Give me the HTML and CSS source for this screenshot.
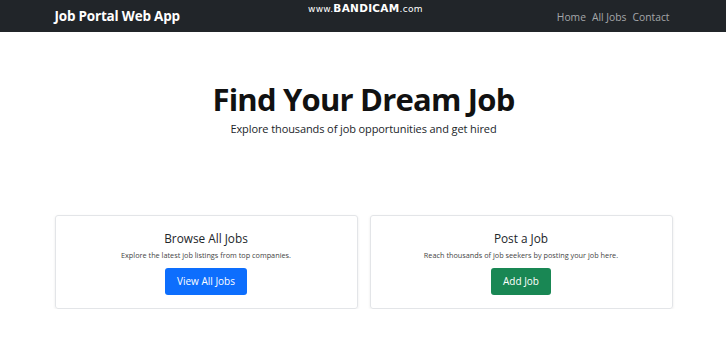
FILE: index.html
```html
<!DOCTYPE html>
<html lang="en">
<head>
    <meta charset="UTF-8">
    <meta name="viewport" content="width=device-width, initial-scale=1.0">
    <title>Job Portal Web App</title>
    <link rel="stylesheet" href="styles.css">
</head>
<body>
    <header class="navbar">
        <div class="container nav-inner">
            <a class="brand" href="#">Job Portal Web App</a>
            <ul class="nav-links">
                <li><a href="#">Home</a></li>
                <li><a href="#">All Jobs</a></li>
                <li><a href="#">Contact</a></li>
            </ul>
        </div>
    </header>
    <div class="watermark">www.<b>BANDICAM</b>.com</div>

    <main class="container">
        <section class="hero">
            <h1>Find Your Dream Job</h1>
            <p>Explore thousands of job opportunities and get hired</p>
        </section>

        <section class="cards">
            <div class="card">
                <h5>Browse All Jobs</h5>
                <p>Explore the latest job listings from top companies.</p>
                <a class="btn btn-primary" href="#">View All Jobs</a>
            </div>
            <div class="card">
                <h5>Post a Job</h5>
                <p>Reach thousands of job seekers by posting your job here.</p>
                <a class="btn btn-success" href="#">Add Job</a>
            </div>
        </section>
    </main>
</body>
</html>
```

FILE: styles.css
```css
body {
	font-family: "Open Sans", "Noto Sans", sans-serif;
	margin: 0;
	padding: 0;
	background: #fff;
	color: #212529;
}

.container {
	width: 618px;
	margin: 0 auto;
	padding-left: 1px;
}

.navbar {
	background: #212529;
	height: 32px;
}

.nav-inner {
	display: flex;
	align-items: center;
	justify-content: space-between;
	height: 32px;
}

.brand {
	color: #fff;
	font-weight: 700;
	font-size: 13.5px;
	letter-spacing: -0.2px;
	text-decoration: none;
}

.nav-links {
	display: flex;
	gap: 6px;
	list-style: none;
	margin: 1px 3px 0 0;
	padding: 0;
	font-size: 10.3px;
}

.nav-links a {
	color: #a5a7a9;
	text-decoration: none;
}

.watermark {
	position: absolute;
	top: 2px;
	left: 308px;
	color: #fff;
	font-family: "DejaVu Sans", sans-serif;
	font-size: 9px;
	letter-spacing: 0.3px;
}

.watermark b {
	font-size: 10.5px;
}

.hero {
	text-align: center;
	padding-top: 48px;
}

.hero h1 {
	font-size: 31px;
	font-weight: 700;
	letter-spacing: -0.8px;
	margin: 0;
	line-height: 38px;
	color: #111;
}

.hero p {
	font-size: 11px;
	letter-spacing: -0.1px;
	margin: 3px 0 0;
}

.cards {
	display: grid;
	grid-template-columns: 1fr 1fr;
	gap: 12px;
	margin-top: 79px;
}

.card {
	border: 1px solid #e3e5e8;
	border-radius: 3px;
	box-shadow: 0 1px 3px rgba(0, 0, 0, 0.08);
	text-align: center;
	padding: 13px 10px 13px;
}

.card h5 {
	font-size: 11.8px;
	font-weight: 500;
	margin: 0 0 2px;
	line-height: 18px;
}

.card p {
	font-size: 7.3px;
	color: #444;
	margin: 0 0 7px;
	line-height: 12px;
}

.btn {
	display: inline-block;
	color: #fff;
	text-decoration: none;
	font-size: 10px;
	line-height: 13px;
	padding: 7px 12px;
	border-radius: 3px;
}

.btn-primary {
	background: #0d6efd;
}

.btn-success {
	background: #198754;
}
```
